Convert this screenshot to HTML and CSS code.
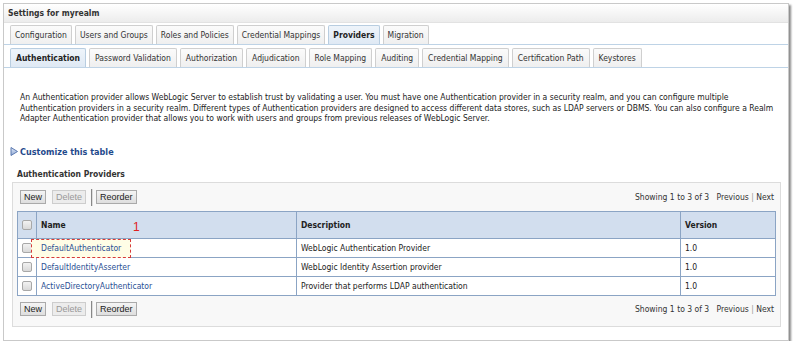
FILE: index.html
```html
<!DOCTYPE html>
<html>
<head>
<meta charset="utf-8">
<link rel="stylesheet" href="styles.css">
</head>
<body>
<div class="frame">
  <div class="title">Settings for myrealm</div>
  <div class="tabs tabs1">
    <span class="tab">Configuration</span>
    <span class="tab">Users and Groups</span>
    <span class="tab">Roles and Policies</span>
    <span class="tab">Credential Mappings</span>
    <span class="tab active">Providers</span>
    <span class="tab">Migration</span>
  </div>
  <div class="tabs tabs2">
    <span class="tab active">Authentication</span>
    <span class="tab">Password Validation</span>
    <span class="tab">Authorization</span>
    <span class="tab">Adjudication</span>
    <span class="tab">Role Mapping</span>
    <span class="tab">Auditing</span>
    <span class="tab">Credential Mapping</span>
    <span class="tab">Certification Path</span>
    <span class="tab">Keystores</span>
  </div>
  <p class="desc">An Authentication provider allows WebLogic Server to establish trust by validating a user. You must have one Authentication provider in a security realm, and you can configure multiple<br>Authentication providers in a security realm. Different types of Authentication providers are designed to access different data stores, such as LDAP servers or DBMS. You can also configure a Realm Adapter Authentication provider that allows you to work with users and groups from previous releases of WebLogic Server.</p>
  <div class="customize">
    <svg class="tri" width="8" height="9" viewBox="0 0 8 9"><defs><linearGradient id="g" x1="0" y1="0" x2="0" y2="1"><stop offset="0" stop-color="#dfe8f6"/><stop offset="1" stop-color="#8fa8d4"/></linearGradient></defs><path d="M1 0.5 L7.5 4.5 L1 8.5 Z" fill="url(#g)" stroke="#5a78b0" stroke-width="1"/></svg>
    <span>Customize this table</span>
  </div>
  <div class="section-title">Authentication Providers</div>
  <div class="panel">
    <div class="toolbar">
      <div class="btns">
        <span class="btn">New</span>
        <span class="btn disabled">Delete</span>
        <span class="sep"></span>
        <span class="btn">Reorder</span>
      </div>
      <div class="paging">Showing 1 to 3 of 3&nbsp;&nbsp; Previous <span class="bar">|</span> Next</div>
    </div>
    <table class="grid">
      <thead>
        <tr>
          <th class="c-chk"><span class="chk"></span></th>
          <th class="c-name">Name <span class="num">1</span></th>
          <th class="c-desc">Description</th>
          <th class="c-ver">Version</th>
        </tr>
      </thead>
      <tbody>
        <tr>
          <td class="c-chk"><span class="chk"></span></td>
          <td class="c-name"><span class="hl">DefaultAuthenticator</span></td>
          <td>WebLogic Authentication Provider</td>
          <td>1.0</td>
        </tr>
        <tr>
          <td class="c-chk"><span class="chk"></span></td>
          <td class="c-name"><a>DefaultIdentityAsserter</a></td>
          <td>WebLogic Identity Assertion provider</td>
          <td>1.0</td>
        </tr>
        <tr>
          <td class="c-chk"><span class="chk"></span></td>
          <td class="c-name"><a>ActiveDirectoryAuthenticator</a></td>
          <td>Provider that performs LDAP authentication</td>
          <td>1.0</td>
        </tr>
      </tbody>
    </table>
    <div class="toolbar bottom">
      <div class="btns">
        <span class="btn">New</span>
        <span class="btn disabled">Delete</span>
        <span class="sep"></span>
        <span class="btn">Reorder</span>
      </div>
      <div class="paging">Showing 1 to 3 of 3&nbsp;&nbsp; Previous <span class="bar">|</span> Next</div>
    </div>
  </div>
</div>
</body>
</html>
```
FILE: styles.css
```css
* { box-sizing: border-box; }
html, body { margin: 0; padding: 0; background: #fff; }
body {
  font-family: "DejaVu Sans Condensed", "DejaVu Sans", sans-serif;
  font-size: 8.5px;
  color: #222;
  padding: 3px 0 0 3px;
}
.frame {
  width: 786px;
  height: 338px;
  border: 1px solid #c9c9c9;
  box-shadow: 2px 2px 2px #8a8a8a;
  background: #fff;
}
.title {
  height: 19px;
  line-height: 18px;
  padding-left: 4px;
  font-weight: bold;
  color: #333;
  background: linear-gradient(#ffffff, #ececec);
  border-bottom: 1px solid #e2e2e2;
}
.tabs {
  display: flex;
  gap: 3px;
  padding-left: 6px;
  border-bottom: 1px solid #bed3e6;
  margin-top: 2px;
}
.tabs2 { margin-top: 3px; }
.tab {
  height: 19px;
  line-height: 18px;
  padding: 0 5px;
  border: 1px solid #cfcfcf;
  border-bottom: none;
  border-radius: 2px 2px 0 0;
  background: linear-gradient(#fbfbfb, #efefef);
  color: #333;
}
.tabs1 .tab { padding: 0 4px; }
.tab.active {
  font-weight: bold;
  background: linear-gradient(#eef4fa, #dfe9f4);
  border-color: #b8cde0;
  color: #222;
}
.desc {
  margin: 24px 8px 0 16px;
  line-height: 10.5px;
  color: #222;
}
.customize {
  display: flex;
  align-items: center;
  gap: 2px;
  margin: 23px 0 0 6px;
  font-weight: bold;
  color: #1f4a8c;
  font-size: 9px;
}
.section-title {
  margin: 12px 0 0 13px;
  font-weight: bold;
  color: #333;
}
.panel {
  margin: 3px 7px 0 8px;
  border: 1px solid #dcdcdc;
  background: #f8f8f8;
  padding: 6px 4px 8px 4px;
}
.toolbar {
  display: flex;
  justify-content: space-between;
  align-items: center;
  height: 17px;
  margin-bottom: 5px;
}
.toolbar.bottom { margin: 5px 0 0 0; }
.btns { display: flex; align-items: center; gap: 6px; padding-left: 3px; }
.btn {
  font-family: "Liberation Sans", Arial, sans-serif;
  font-size: 9px;
  height: 14px;
  line-height: 12px;
  padding: 0 3px;
  border: 1px solid #aaa;
  background: linear-gradient(#f4f4f4, #dedede);
  color: #222;
}
.btn.disabled { color: #999; border-color: #cdcdcd; background: #ececec; }
.sep { width: 2px; height: 17px; background: #888; border-right: 1px solid #ddd; margin: 0 -3px 0 -1px; }
.paging { color: #333; padding-right: 2px; }
.bar { color: #999; }
.grid {
  width: 100%;
  border-collapse: collapse;
  background: #fff;
  border: 1px solid #7f9cbd;
}
.grid th, .grid td {
  border: 1px solid #8ba4c4;
  text-align: left;
  padding: 0 4px;
  white-space: nowrap;
}
.grid th {
  height: 27px;
  background: #d2deee;
  font-weight: bold;
  color: #222;
}
.grid td { height: 19px; color: #222; }
.grid .c-chk { width: 19px; padding: 0; text-align: center; }
.grid .c-name { width: 260px; position: relative; }
.grid .c-desc { width: 384px; }
.chk {
  display: inline-block;
  width: 10px;
  height: 10px;
  border: 1px solid #a8a8a8;
  border-radius: 2px;
  background: linear-gradient(#f2f2f2, #d9d9d9);
  vertical-align: middle;
}
.grid a, .hl { color: #2a4f94; }
.hl {
  position: absolute;
  left: -6px;
  top: 0;
  height: 19px;
  line-height: 17px;
  padding: 0 9px;
  width: 100px;
  border: 1px dashed #d63a3a;
  background: #fffde6;
}
.num {
  position: absolute;
  left: 96px;
  top: 8px;
  color: #e02020;
  font-family: "Liberation Sans", Arial, sans-serif;
  font-size: 12px;
  font-weight: normal;
}
```
